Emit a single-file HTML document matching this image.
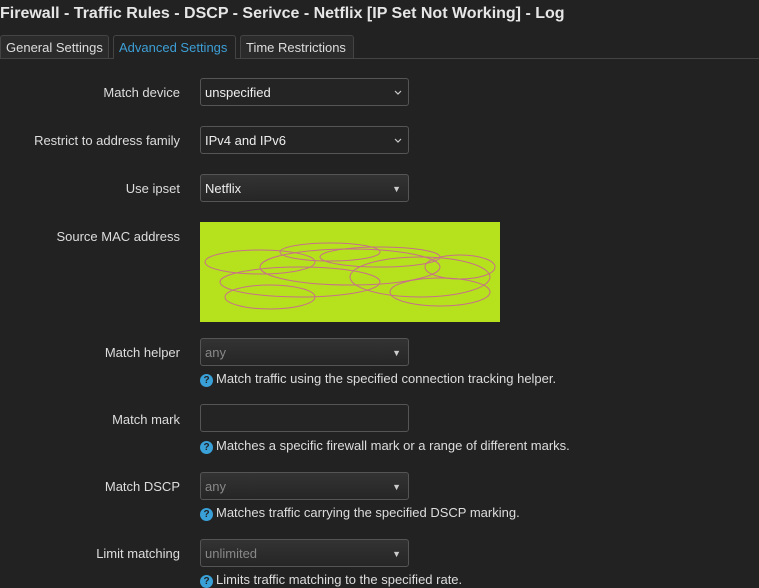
<!DOCTYPE html>
<html><head><style>
body{margin:0;width:759px;height:588px;background:#222;font-family:"Liberation Sans",sans-serif;color:#ddd;overflow:hidden;position:relative}
.t{position:absolute;left:0;top:5px;font-size:16px;font-weight:bold;color:#e6e6e6;white-space:nowrap}
.tab{position:absolute;top:35px;height:23px;border:1px solid #444;border-bottom:none;border-radius:3px 3px 0 0;background:#2b2b2b;font-size:13px;line-height:24px;padding:0 5px;color:#ddd;box-sizing:border-box}
.line{position:absolute;top:58px;left:0;width:759px;height:1px;background:#444}
.l{position:absolute;right:579px;font-size:13px;color:#ddd;white-space:nowrap}
.s{position:absolute;left:200px;width:209px;height:28px;box-sizing:border-box;border:1px solid #555;border-radius:3px;background:#242424;font-size:13px;line-height:28px;padding-left:4px;color:#eee}
.g{background:linear-gradient(#333,#262626);color:#888}
.s .a{position:absolute;right:7px;top:0;font-size:9px;color:#ccc}
.s svg{position:absolute;right:6px;top:11px}
.h{position:absolute;left:200px;font-size:13px;color:#ddd;white-space:nowrap}
.q{display:inline-block;width:13px;height:13px;border-radius:50%;background:#3aa0d8;color:#222;font-size:10px;font-weight:bold;text-align:center;line-height:13px;margin-right:3px;vertical-align:0px}
</style></head><body>
<div class="t">Firewall - Traffic Rules - DSCP - Serivce - Netflix [IP Set Not Working] - Log</div>
<div class="tab" style="left:0;width:109px">General Settings</div>
<div class="tab" style="left:113px;width:123px;color:#3d9fd6;background:#222;height:24px;z-index:2">Advanced Settings</div>
<div class="tab" style="left:240px;width:114px">Time Restrictions</div>
<div class="line"></div>
<div class="l" style="top:85px">Match device</div>
<div class="s" style="top:78px">unspecified<svg width="8" height="6"><path d="M1 1L4 4L7 1" fill="none" stroke="#ccc" stroke-width="1.2"/></svg></div>
<div class="l" style="top:133px">Restrict to address family</div>
<div class="s" style="top:126px">IPv4 and IPv6<svg width="8" height="6"><path d="M1 1L4 4L7 1" fill="none" stroke="#ccc" stroke-width="1.2"/></svg></div>
<div class="l" style="top:181px">Use ipset</div>
<div class="s g" style="top:174px;color:#eee">Netflix<span class="a">▼</span></div>
<div class="l" style="top:229px">Source MAC address</div>
<svg style="position:absolute;left:200px;top:222px" width="300" height="100"><rect width="300" height="100" fill="#b5e21c"/>
<g fill="none" stroke="#c8708a" stroke-width="1">
<ellipse cx="60" cy="40" rx="55" ry="12"/><ellipse cx="150" cy="45" rx="90" ry="18"/><ellipse cx="220" cy="55" rx="70" ry="20"/><ellipse cx="100" cy="60" rx="80" ry="15"/><ellipse cx="180" cy="35" rx="60" ry="10"/><ellipse cx="240" cy="70" rx="50" ry="14"/><ellipse cx="70" cy="75" rx="45" ry="12"/><ellipse cx="130" cy="30" rx="50" ry="9"/><ellipse cx="260" cy="45" rx="35" ry="12"/>
</g></svg>
<div class="l" style="top:345px">Match helper</div>
<div class="s g" style="top:338px">any<span class="a">▼</span></div>
<div class="h" style="top:371px"><span class="q">?</span>Match traffic using the specified connection tracking helper.</div>
<div class="l" style="top:412px">Match mark</div>
<div class="s" style="top:404px"></div>
<div class="h" style="top:438px"><span class="q">?</span>Matches a specific firewall mark or a range of different marks.</div>
<div class="l" style="top:479px">Match DSCP</div>
<div class="s g" style="top:472px">any<span class="a">▼</span></div>
<div class="h" style="top:505px"><span class="q">?</span>Matches traffic carrying the specified DSCP marking.</div>
<div class="l" style="top:546px">Limit matching</div>
<div class="s g" style="top:539px">unlimited<span class="a">▼</span></div>
<div class="h" style="top:572px"><span class="q">?</span>Limits traffic matching to the specified rate.</div>
</body></html>
